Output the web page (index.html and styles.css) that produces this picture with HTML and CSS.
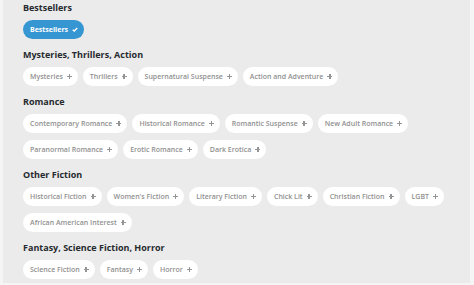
FILE: index.html
```html
<!DOCTYPE html>
<html lang="en">
<head>
    <meta charset="UTF-8">
    <meta name="viewport" content="width=device-width, initial-scale=1.0">
    <title>Genres</title>
    <link rel="stylesheet" href="styles.css">
</head>
<body>

    <!-- Genre picker -->
    <div class="genres">

        <div class="genre-group">
            <h2>Bestsellers</h2>
            <div class="tags">
                <span class="tag active">Bestsellers
                    <svg class="check" viewBox="0 0 8 6" width="6" height="5"><path d="M1 3.2 L3 5 L7 1" fill="none" stroke="#fff" stroke-width="1.8"/></svg>
                </span>
            </div>
        </div>

        <div class="genre-group">
            <h2>Mysteries, Thrillers, Action</h2>
            <div class="tags">
                <span class="tag">Mysteries <i class="plus"></i></span>
                <span class="tag">Thrillers <i class="plus"></i></span>
                <span class="tag">Supernatural Suspense <i class="plus"></i></span>
                <span class="tag">Action and Adventure <i class="plus"></i></span>
            </div>
        </div>

        <div class="genre-group">
            <h2>Romance</h2>
            <div class="tags">
                <span class="tag">Contemporary Romance <i class="plus"></i></span>
                <span class="tag">Historical Romance <i class="plus"></i></span>
                <span class="tag">Romantic Suspense <i class="plus"></i></span>
                <span class="tag">New Adult Romance <i class="plus"></i></span>
                <span class="tag">Paranormal Romance <i class="plus"></i></span>
                <span class="tag">Erotic Romance <i class="plus"></i></span>
                <span class="tag">Dark Erotica <i class="plus"></i></span>
            </div>
        </div>

        <div class="genre-group">
            <h2>Other Fiction</h2>
            <div class="tags">
                <span class="tag">Historical Fiction <i class="plus"></i></span>
                <span class="tag">Women's Fiction <i class="plus"></i></span>
                <span class="tag">Literary Fiction <i class="plus"></i></span>
                <span class="tag">Chick Lit <i class="plus"></i></span>
                <span class="tag">Christian Fiction <i class="plus"></i></span>
                <span class="tag">LGBT <i class="plus"></i></span>
                <span class="tag">African American Interest <i class="plus"></i></span>
            </div>
        </div>

        <div class="genre-group">
            <h2>Fantasy, Science Fiction, Horror</h2>
            <div class="tags">
                <span class="tag">Science Fiction <i class="plus"></i></span>
                <span class="tag">Fantasy <i class="plus"></i></span>
                <span class="tag">Horror <i class="plus"></i></span>
            </div>
        </div>

    </div>

</body>
</html>
```

FILE: styles.css
```css
/* Page */
body {
    margin: 0;
    background-color: #f5f5f5;
    font-family: "Open Sans", Arial, sans-serif;
}

.genres {
    margin-left: 3px;
    width: 447px;
    height: 281px;
    padding: 2px 0 0 20px;
    background-color: #ebebeb;
}

/* Group headings */
.genre-group {
    margin-bottom: 10px;
}

.genre-group h2 {
    margin: 0 0 6px;
    font-size: 9px;
    line-height: 12px;
    font-weight: 700;
    color: #262a2e;
}

/* Tag pills */
.tags {
    display: flex;
    flex-wrap: wrap;
    gap: 7px 5px;
    width: 425px;
}

.tag {
    display: inline-flex;
    align-items: center;
    gap: 4px;
    height: 19px;
    padding: 0 6px 0 7px;
    border-radius: 10px;
    background: #ffffff;
    font-size: 7px;
    font-weight: 600;
    color: #909090;
    white-space: nowrap;
}

.tag.active {
    background: #3596d2;
    color: #ffffff;
    font-weight: 700;
}

.check {
    display: block;
}

.plus {
    position: relative;
    width: 5px;
    height: 5px;
}

.plus::before,
.plus::after {
    content: "";
    position: absolute;
    background: #959595;
}

.plus::before {
    left: 0;
    top: 1.75px;
    width: 5px;
    height: 1.5px;
}

.plus::after {
    left: 1.75px;
    top: 0;
    width: 1.5px;
    height: 5px;
}
```
